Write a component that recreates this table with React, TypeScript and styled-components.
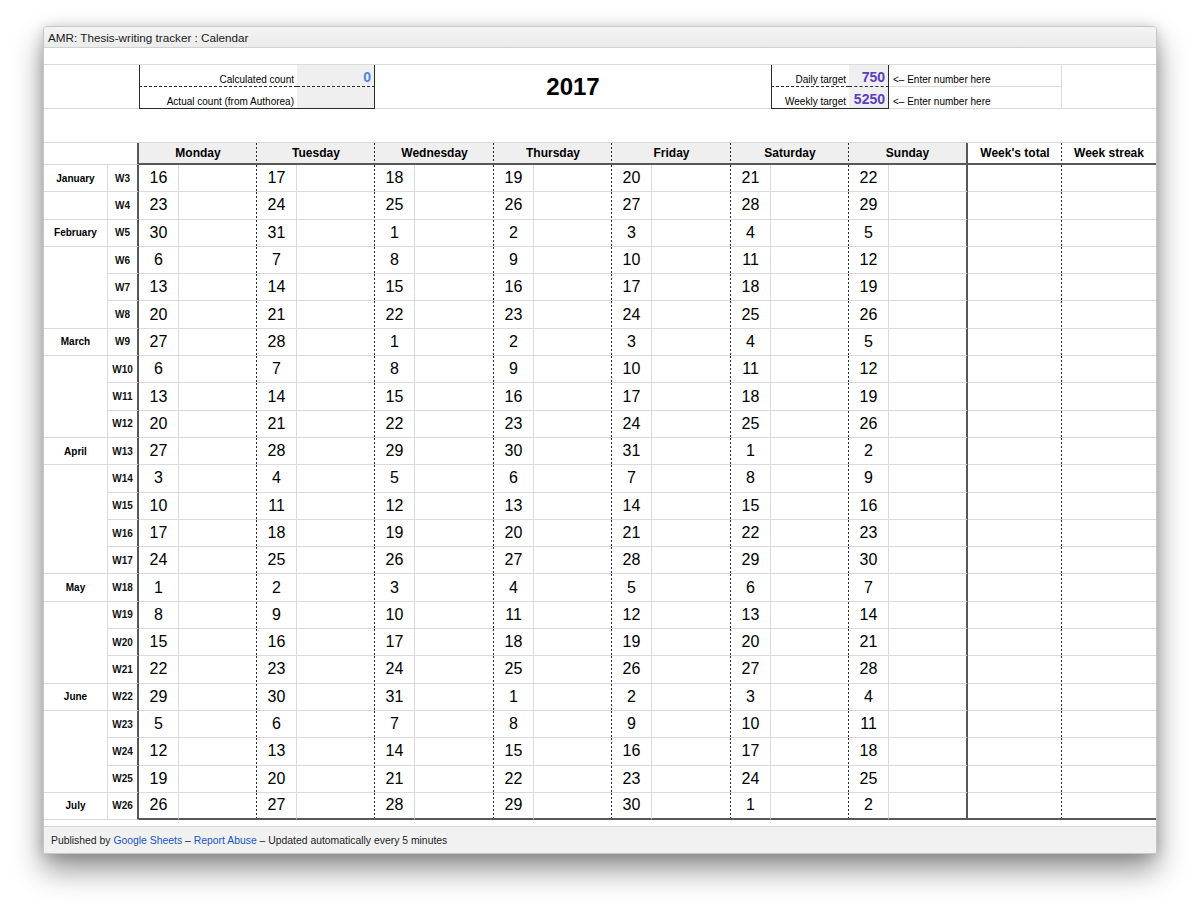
import React from "react";
import styled, { createGlobalStyle, css } from "styled-components";

const GRID = "#dadada";
const DARK = "#2a2a2a";
const THICK = "#575757";
const ROW_H = 27.3;

const COL_WIDTHS = [64, 31, 40, 78, 40, 78, 40, 79, 40, 78, 40, 79, 40, 78, 40, 79, 94, 94];
const COLS = COL_WIDTHS.map((w) => `${w}px`).join(" ");
const WEEK_COLS = COL_WIDTHS.slice(1).map((w) => `${w}px`).join(" ");

const GlobalStyle = createGlobalStyle`
  html, body { margin: 0; padding: 0; background: #fff; }
  body {
    font-family: "Liberation Sans", Arial, Helvetica, sans-serif;
    color: #000;
  }
  * { box-sizing: border-box; }
`;

const dashRight = css`
  background-image: repeating-linear-gradient(to bottom, ${DARK} 0 2px, transparent 2px 4px);
  background-size: 1px 100%;
  background-position: right top;
  background-repeat: no-repeat;
`;

const Page = styled.div`
  padding: 26px 0 0 43px;
  min-height: 917px;
`;

const Window = styled.div`
  width: 1114px;
  border: 1px solid #c6c6c6;
  border-radius: 4px 4px 2px 2px;
  background: #fff;
  box-shadow: 0 16px 30px rgba(0, 0, 0, 0.42), 0 2px 14px rgba(0, 0, 0, 0.18);
  overflow: hidden;
`;

const TitleBar = styled.div`
  height: 21px;
  display: flex;
  align-items: center;
  padding-left: 4px;
  font-size: 11.7px;
  color: #1a1a1a;
  background: linear-gradient(#f4f4f4, #ebebeb);
  border-bottom: 1px solid #d2d2d2;
`;

const BlankRow = styled.div<{ $h: number }>`
  height: ${(p) => p.$h}px;
  border-bottom: 1px solid ${GRID};
`;

const InfoGrid = styled.div`
  display: grid;
  grid-template-columns: ${COLS};
  grid-template-rows: 22px 22px;
`;

const InfoBlank = styled.div<{ $col: string; $row: string }>`
  grid-column: ${(p) => p.$col};
  grid-row: ${(p) => p.$row};
  border-bottom: 1px solid ${GRID};
`;

const CountLabel = styled.div<{ $col: string; $row: number; $last?: boolean }>`
  grid-column: ${(p) => p.$col};
  grid-row: ${(p) => p.$row};
  display: flex;
  align-items: flex-end;
  justify-content: flex-end;
  padding: 0 3px 0 0;
  font-size: 10px;
  line-height: 12px;
  white-space: nowrap;
  border-left: 1px solid ${DARK};
  border-bottom: 1px ${(p) => (p.$last ? "solid" : "dashed")} ${DARK};
`;

const CountValue = styled.div<{ $col: string; $row: number; $last?: boolean; $color: string }>`
  grid-column: ${(p) => p.$col};
  grid-row: ${(p) => p.$row};
  display: flex;
  align-items: flex-end;
  justify-content: flex-end;
  padding: 0 3px 0 0;
  font-size: 14px;
  line-height: 17px;
  font-weight: bold;
  color: ${(p) => p.$color};
  background: #efefef;
  border-right: 1px solid ${DARK};
  border-bottom: 1px ${(p) => (p.$last ? "solid" : "dashed")} ${DARK};
`;

const YearCell = styled.div`
  grid-column: 7 / 14;
  grid-row: 1 / 3;
  display: flex;
  align-items: center;
  justify-content: center;
  font-size: 24px;
  font-weight: bold;
  border-bottom: 1px solid ${GRID};
`;

const Hint = styled.div<{ $row: number }>`
  grid-column: 16 / 18;
  grid-row: ${(p) => p.$row};
  display: flex;
  align-items: flex-end;
  padding: 0 0 0 4px;
  font-size: 10px;
  line-height: 12px;
  border-right: 1px solid ${GRID};
  border-bottom: 1px solid ${GRID};
`;

const HeaderRow = styled.div`
  display: grid;
  grid-template-columns: ${COLS};
  height: 22px;
`;

const HeaderCorner = styled.div`
  grid-column: 1 / 3;
  border-right: 2px solid ${THICK};
  border-bottom: 1px solid ${GRID};
`;

const HeadCell = styled.div<{ $span: number; $shaded?: boolean; $end: "dash" | "solid" | "none" }>`
  grid-column: span ${(p) => p.$span};
  display: flex;
  align-items: center;
  justify-content: center;
  font-size: 12px;
  font-weight: bold;
  background-color: ${(p) => (p.$shaded ? "#efefef" : "#fff")};
  border-bottom: 2px solid ${THICK};
  ${(p) => p.$end === "dash" && dashRight}
  ${(p) => p.$end === "solid" && css`border-right: 2px solid ${THICK};`}
`;

const Body = styled.div`
  display: flex;
`;

const MonthColumn = styled.div`
  width: 64px;
  flex: none;
  display: flex;
  flex-direction: column;
`;

const MonthGroup = styled.div<{ $weeks: number }>`
  height: ${(p) => p.$weeks * ROW_H}px;
  display: flex;
  flex-direction: column;
`;

const MonthLabel = styled.div`
  height: ${ROW_H}px;
  flex: none;
  display: flex;
  align-items: center;
  justify-content: center;
  font-size: 10px;
  font-weight: bold;
  border-right: 1px solid ${GRID};
  border-bottom: 1px solid ${GRID};
`;

const MonthRest = styled.div`
  flex: 1;
  border-right: 1px solid ${GRID};
  border-bottom: 1px solid ${GRID};
`;

const Weeks = styled.div`
  flex: 1;
  display: flex;
  flex-direction: column;
`;

const WeekRow = styled.div`
  display: grid;
  grid-template-columns: ${WEEK_COLS};
  height: ${ROW_H}px;
`;

const WeekLabel = styled.div`
  display: flex;
  align-items: center;
  justify-content: center;
  font-size: 10px;
  font-weight: bold;
  color: #111;
  border-right: 2px solid ${THICK};
  border-bottom: 1px solid ${GRID};
`;

const bottomLine = css<{ $last: boolean }>`
  border-bottom: ${(p) => (p.$last ? `2px solid ${THICK}` : `1px solid ${GRID}`)};
`;

const DateCell = styled.div<{ $last: boolean }>`
  display: flex;
  align-items: center;
  justify-content: center;
  font-size: 16px;
  border-right: 1px solid ${GRID};
  ${bottomLine}
`;

const NoteCell = styled.div<{ $last: boolean; $end: "dash" | "solid" | "none" }>`
  ${bottomLine}
  ${(p) => p.$end === "dash" && dashRight}
  ${(p) => p.$end === "solid" && css`border-right: 2px solid ${THICK};`}
`;

const Gap = styled.div`
  height: 6px;
`;

const Footer = styled.div`
  height: 27px;
  display: flex;
  align-items: center;
  padding-left: 7px;
  font-size: 10.4px;
  color: #222;
  background: #f1f1f1;
  border-top: 1px solid #d6d6d6;
  white-space: pre;
`;

const FooterLink = styled.a`
  color: #1155cc;
  text-decoration: none;
`;

const DAYS = ["Monday", "Tuesday", "Wednesday", "Thursday", "Friday", "Saturday", "Sunday"];

const MONTHS = [
  { name: "January", weeks: 2 },
  { name: "February", weeks: 4 },
  { name: "March", weeks: 4 },
  { name: "April", weeks: 5 },
  { name: "May", weeks: 4 },
  { name: "June", weeks: 4 },
  { name: "July", weeks: 1 },
];

const WEEKS = Array.from({ length: 24 }, (_, i) => ({
  label: `W${i + 3}`,
  dates: Array.from({ length: 7 }, (_, d) => new Date(2017, 0, 16 + i * 7 + d).getDate()),
}));

export default function App() {
  return (
    <>
      <GlobalStyle />
      <Page>
        <Window>
          <TitleBar>AMR: Thesis-writing tracker : Calendar</TitleBar>
          <BlankRow $h={17} />
          <InfoGrid>
            <InfoBlank $col="1 / 3" $row="1 / 3" />
            <CountLabel $col="3 / 6" $row={1}>Calculated count</CountLabel>
            <CountValue $col="6" $row={1} $color="#4a86e8">0</CountValue>
            <CountLabel $col="3 / 6" $row={2} $last>Actual count (from Authorea)</CountLabel>
            <CountValue $col="6" $row={2} $last $color="#4a86e8" />
            <YearCell>2017</YearCell>
            <CountLabel $col="14" $row={1}>Daily target</CountLabel>
            <CountValue $col="15" $row={1} $color="#5b3cc2">750</CountValue>
            <Hint $row={1}>{"<– Enter number here"}</Hint>
            <CountLabel $col="14" $row={2} $last>Weekly target</CountLabel>
            <CountValue $col="15" $row={2} $last $color="#5b3cc2">5250</CountValue>
            <Hint $row={2}>{"<– Enter number here"}</Hint>
            <InfoBlank $col="18" $row="1 / 3" />
          </InfoGrid>
          <BlankRow $h={34} />
          <HeaderRow>
            <HeaderCorner />
            {DAYS.map((d, i) => (
              <HeadCell key={d} $span={2} $shaded $end={i === 6 ? "solid" : "dash"}>
                {d}
              </HeadCell>
            ))}
            <HeadCell $span={1} $end="dash">Week's total</HeadCell>
            <HeadCell $span={1} $end="none">Week streak</HeadCell>
          </HeaderRow>
          <Body>
            <MonthColumn>
              {MONTHS.map((m) => (
                <MonthGroup key={m.name} $weeks={m.weeks}>
                  <MonthLabel>{m.name}</MonthLabel>
                  {m.weeks > 1 && <MonthRest />}
                </MonthGroup>
              ))}
            </MonthColumn>
            <Weeks>
              {WEEKS.map((w, wi) => {
                const last = wi === WEEKS.length - 1;
                return (
                  <WeekRow key={w.label}>
                    <WeekLabel>{w.label}</WeekLabel>
                    {w.dates.map((n, di) => (
                      <React.Fragment key={di}>
                        <DateCell $last={last}>{n}</DateCell>
                        <NoteCell $last={last} $end={di === 6 ? "solid" : "dash"} />
                      </React.Fragment>
                    ))}
                    <NoteCell $last={last} $end="dash" />
                    <NoteCell $last={last} $end="none" />
                  </WeekRow>
                );
              })}
            </Weeks>
          </Body>
          <Gap />
          <Footer>
            {"Published by "}
            <FooterLink href="#">Google Sheets</FooterLink>
            {" – "}
            <FooterLink href="#">Report Abuse</FooterLink>
            {" – Updated automatically every 5 minutes"}
          </Footer>
        </Window>
      </Page>
    </>
  );
}
